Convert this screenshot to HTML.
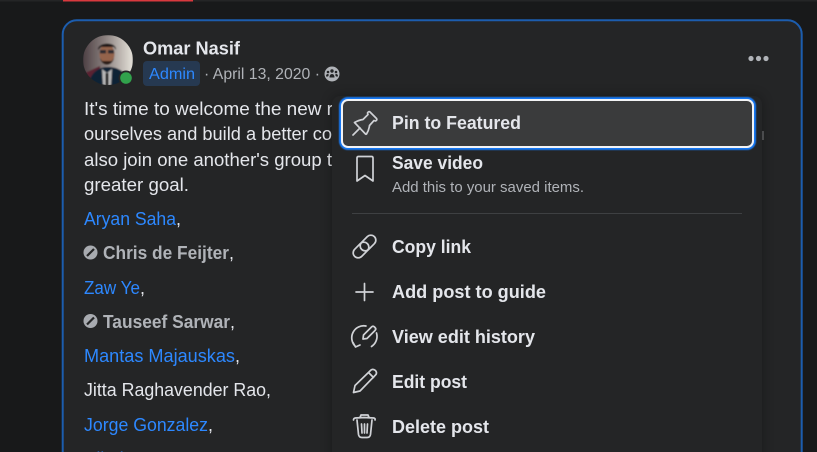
<!DOCTYPE html>
<html><head><meta charset="utf-8"><style>
html,body{margin:0;padding:0;width:817px;height:452px;overflow:hidden;background:#18191a}
svg{display:block;width:817px;height:452px;overflow:hidden}
text{font-family:"Liberation Sans",sans-serif}
.b{font-size:18px;fill:#e4e6eb}
.l{font-size:18px;fill:#2d88ff}
.g{font-size:18px;fill:#b0b3b8;font-weight:bold}
.m{font-size:18.5px;font-weight:bold;fill:#e4e6eb}
.i{fill:none;stroke:#d0d2d6;stroke-width:1.7;stroke-linejoin:round;stroke-linecap:round}
</style></head><body>
<svg width="817" height="452" viewBox="0 0 817 452" xmlns="http://www.w3.org/2000/svg">
<defs>
<clipPath id="av"><circle cx="108" cy="60" r="25"/></clipPath>
<clipPath id="pg"><rect width="817" height="452"/></clipPath>
<linearGradient id="avbg" x1="0" y1="0" x2="1" y2="0"><stop offset="0" stop-color="#4d4044"/><stop offset=".45" stop-color="#8c8280"/><stop offset="1" stop-color="#e6e2da"/></linearGradient>
<filter id="bl"><feGaussianBlur stdDeviation=".8"/></filter>
<filter id="bl2" x="-5%" y="-20%" width="110%" height="140%"><feGaussianBlur stdDeviation=".5"/></filter>
<filter id="sh" x="-10%" y="-10%" width="120%" height="120%"><feGaussianBlur stdDeviation="6"/></filter>
</defs>
<g clip-path="url(#pg)">
<rect width="817" height="452" fill="#18191a"/>
<rect x="0" y="0" width="817" height="1.500" fill="#242526"/>
<rect x="63" y="0" width="130" height="1.500" fill="#d9393e"/>
<rect x="62.700" y="20.300" width="739" height="470" rx="14" fill="#242526" stroke="#1c5dae" stroke-width="2"/>
<g clip-path="url(#av)"><g filter="url(#bl)">
<rect x="83" y="35" width="50" height="50" fill="url(#avbg)"/>
<path d="M83 74 L100 66 L100 85 L83 85Z" fill="#5a2230"/>
<path d="M88 86 C90 73 98 67 108 67 C118 67 128 72 131 86Z" fill="#0f2035"/>
<path d="M102 69 L107 73 L112 69 L111 86 L103 86Z" fill="#b8b8b8"/>
<rect x="105.500" y="73" width="3" height="13" fill="#1c1c1c"/>
<ellipse cx="107" cy="54" rx="7.500" ry="10" fill="#94634c"/>
<path d="M98 50 C97 42 117 41 116 50 L114 47 L101 47Z" fill="#1f1613"/>
<path d="M100 58 C102 67 112 67 114 58 L112 61 L102 61Z" fill="#2a1c18"/>
<rect x="100" y="50" width="6" height="3.500" fill="#2c2c30"/><rect x="108" y="50" width="6" height="3.500" fill="#2c2c30"/>
</g></g>
<circle cx="126" cy="78" r="7.500" fill="#242526"/>
<circle cx="126" cy="78" r="5.800" fill="#31a24c"/>
<text x="143" y="54.500" font-size="18.500" font-weight="bold" fill="#e4e6eb" textLength="97" lengthAdjust="spacingAndGlyphs">Omar Nasif</text>
<rect x="143" y="61" width="57" height="25" rx="4" fill="#263951"/>
<text x="149" y="79" font-size="16" fill="#2d88ff" textLength="46" lengthAdjust="spacingAndGlyphs">Admin</text>
<text x="204" y="79" font-size="16" fill="#b0b3b8" textLength="116" lengthAdjust="spacingAndGlyphs">· April 13, 2020 ·</text>
<circle cx="332" cy="74" r="7.500" fill="#b0b3b8"/>
<circle cx="332" cy="71" r="1.700" fill="#242526"/><circle cx="328" cy="72" r="1.300" fill="#242526"/><circle cx="336" cy="72" r="1.300" fill="#242526"/>
<path d="M329.500 77.500 q0 -3.500 2.500 -3.500 q2.500 0 2.500 3.500Z M326 76.500 q0 -2.500 1.800 -2.500 q1 0 1 1 l-.8 1.500Z M338 76.500 q0 -2.500 -1.800 -2.500 q-1 0 -1 1 l.8 1.500Z" fill="#242526"/>
<text x="84" y="115" class="b" textLength="249" lengthAdjust="spacingAndGlyphs">It's time to welcome the new r</text>
<text x="84" y="140" class="b" textLength="248" lengthAdjust="spacingAndGlyphs">ourselves and build a better co</text>
<text x="84" y="166" class="b" textLength="248" lengthAdjust="spacingAndGlyphs">also join one another's group t</text>
<text x="84" y="191" class="b" textLength="105" lengthAdjust="spacingAndGlyphs">greater goal.</text>
<text x="84" y="225" class="l" textLength="92" lengthAdjust="spacingAndGlyphs">Aryan Saha</text><text x="176" y="225" class="b">,</text>
<circle cx="90.500" cy="252.500" r="7" fill="#a8abb0"/><path d="M87 256 L94 249" stroke="#242526" stroke-width="2.200"/>
<text x="103" y="259" class="g" textLength="126" lengthAdjust="spacingAndGlyphs">Chris de Feijter</text><text x="229" y="259" class="b">,</text>
<text x="84" y="294" class="l" textLength="56" lengthAdjust="spacingAndGlyphs">Zaw Ye</text><text x="140" y="294" class="b">,</text>
<circle cx="90.500" cy="321" r="7" fill="#a8abb0"/><path d="M87 324.500 L94 317.500" stroke="#242526" stroke-width="2.200"/>
<text x="103" y="328" class="g" textLength="127" lengthAdjust="spacingAndGlyphs">Tauseef Sarwar</text><text x="230" y="328" class="b">,</text>
<text x="84" y="362" class="l" textLength="151" lengthAdjust="spacingAndGlyphs">Mantas Majauskas</text><text x="235" y="362" class="b">,</text>
<text x="84" y="396" class="b" textLength="187" lengthAdjust="spacingAndGlyphs">Jitta Raghavender Rao,</text>
<text x="84" y="431" class="l" textLength="124" lengthAdjust="spacingAndGlyphs">Jorge Gonzalez</text><text x="208" y="431" class="b">,</text>
<text x="84" y="465" class="l" textLength="55" lengthAdjust="spacingAndGlyphs">Ribeiro</text>
<circle cx="751" cy="58.500" r="2.600" fill="#b0b3b8"/><circle cx="758.500" cy="58.500" r="2.600" fill="#b0b3b8"/><circle cx="766" cy="58.500" r="2.600" fill="#b0b3b8"/>
<rect x="332" y="96" width="430" height="380" rx="8" fill="#000" opacity=".3" filter="url(#sh)"/>
<rect x="762" y="131" width="2" height="9" fill="#4a4b4d"/>
<rect x="332" y="96" width="430" height="380" rx="8" fill="#242526"/>
<rect x="339" y="97" width="417" height="53" rx="9" fill="#1877f2" filter="url(#bl2)"/>
<rect x="342" y="100" width="411" height="47" rx="6" fill="#3a3b3c" stroke="#f2f3f5" stroke-width="2"/>
<g class="i">
<path d="M353 135 L360 128"/>
<path d="M354.500 122.500 Q359 120 363 119.500 L368 114.500 L367.500 113 Q368.500 111 370 112 L376.500 118.500 Q377.500 120 375.500 121 L374 120.500 L369.500 125.500 Q369 130 366.500 134 Q366 134.500 365.500 134 Z"/>
<path d="M357 158 Q357 156.500 358.500 156.500 H371.500 Q373 156.500 373 158 V181 L365 175.500 L357 181Z"/>
<rect x="352" y="245" width="18" height="10" rx="5" transform="rotate(-45 361 250)"/>
<rect x="359" y="238" width="18" height="10" rx="5" transform="rotate(-45 368 243)"/>
<path d="M356 292 H373 M364.500 283.500 V300.500"/>
<path d="M366 326 A12 12 0 0 0 355.500 346.500 M353 342.500 L355.500 347 L360 345 M376.500 333 A12 12 0 0 1 371.500 346.500"/>
<path d="M363 339 L363.500 335 L371.500 327 Q373 325.500 374.500 327 L375 327.500 Q376.500 329 375 330.500 L367 338.500 Z"/>
<path d="M353.500 392.500 L355 385.500 L371 370 Q373 368.500 375.500 370.500 Q377.500 373 375.500 375 L360 391 Z M368.500 372.500 L373.500 377.500"/>
<path d="M353.500 420 Q353.500 418.500 355 418 L364 417.500 L374 418 Q375.500 418.500 375 420 M357 420 L358.500 434.500 Q359 437.500 362 437.500 H367 Q370 437.500 370.500 434.500 L372 420 M360 417.500 L361 415 H368 L369 417.500 M361.500 424 L362 433 M364.500 424 V433 M367.500 424 L367 433"/>
</g>
<text x="392" y="129" class="m" textLength="129" lengthAdjust="spacingAndGlyphs">Pin to Featured</text>
<text x="392" y="169" class="m" textLength="91" lengthAdjust="spacingAndGlyphs">Save video</text>
<text x="392" y="192" font-size="14.500" fill="#b0b3b8" textLength="192" lengthAdjust="spacingAndGlyphs">Add this to your saved items.</text>
<rect x="352" y="213" width="390" height="1" fill="#3e4042"/>
<text x="392" y="253" class="m" textLength="79" lengthAdjust="spacingAndGlyphs">Copy link</text>
<text x="392" y="298" class="m" textLength="154" lengthAdjust="spacingAndGlyphs">Add post to guide</text>
<text x="392" y="343" class="m" textLength="143" lengthAdjust="spacingAndGlyphs">View edit history</text>
<text x="392" y="388" class="m" textLength="75" lengthAdjust="spacingAndGlyphs">Edit post</text>
<text x="392" y="433" class="m" textLength="97" lengthAdjust="spacingAndGlyphs">Delete post</text>
</g>
</svg>
</body></html>
